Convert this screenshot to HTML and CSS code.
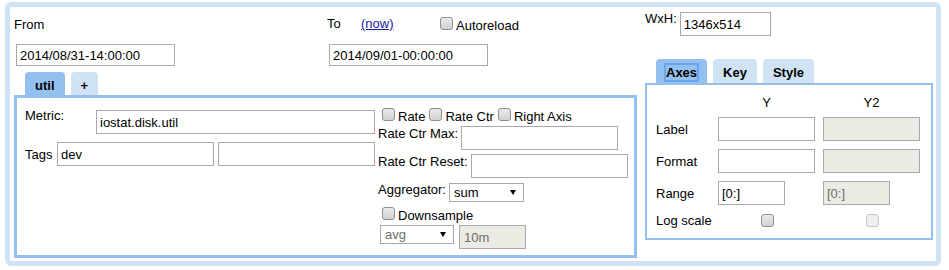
FILE: index.html
```html
<!DOCTYPE html>
<html lang="en">
<head>
    <meta charset="UTF-8">
    <meta name="viewport" content="width=device-width, initial-scale=1.0">
    <title>TSD - Query</title>
    <link rel="stylesheet" href="styles.css">
</head>
<body>
    <div class="frame">
        <div class="query-col">
            <div class="dates">
                <div class="date-box from-box">
                    <div class="date-head"><span class="from-label">From</span></div>
                    <input class="text date-input" type="text" value="2014/08/31-14:00:00">
                </div>
                <div class="date-box">
                    <div class="date-head">
                        <span class="to-label">To</span>
                        <a href="#" class="now-link">(now)</a>
                        <label class="check autoreload"><input type="checkbox">Autoreload</label>
                    </div>
                    <input class="text date-input" type="text" value="2014/09/01-00:00:00">
                </div>
            </div>

            <div class="tabs">
                <span class="tab active">util</span>
                <span class="tab">+</span>
            </div>
            <div class="panel metric-panel">
                <div class="metric-left">
                    <div class="metric-row">
                        <span class="metric-label">Metric:</span>
                        <input class="text metric-input" type="text" value="iostat.disk.util">
                    </div>
                    <div class="tags-row">
                        <span class="tags-label">Tags</span>
                        <input class="text tag-input tag-key" type="text" value="dev">
                        <input class="text tag-input" type="text" value="">
                    </div>
                </div>
                <div class="metric-right">
                    <div class="checks"><label class="check"><input type="checkbox">Rate</label><label class="check"><input type="checkbox">Rate Ctr</label><label class="check"><input type="checkbox">Right Axis</label></div>
                    <div class="field-row">
                        <span>Rate Ctr Max:</span>
                        <input class="text ctr-input" type="text">
                    </div>
                    <div class="field-row spaced">
                        <span>Rate Ctr Reset:</span>
                        <input class="text ctr-input" type="text">
                    </div>
                    <div class="field-row spaced">
                        <span>Aggregator:</span>
                        <div class="select agg-select"><span>sum</span><span class="arrow"></span></div>
                    </div>
                    <div class="downsample"><label class="check"><input type="checkbox">Downsample</label></div>
                    <div class="ds-row">
                        <div class="select ds-select off"><span>avg</span><span class="arrow"></span></div>
                        <input class="text ds-input" type="text" value="10m" disabled>
                    </div>
                </div>
            </div>
        </div>

        <div class="graph-col">
            <div class="wxh-row">
                <span>WxH:</span>
                <input class="text wxh-input" type="text" value="1346x514">
            </div>
            <div class="tabs graph-tabs">
                <span class="tab active"><span class="focus">Axes</span></span>
                <span class="tab">Key</span>
                <span class="tab">Style</span>
            </div>
            <div class="panel axes-panel">
                <div class="axes-grid">
                    <span></span>
                    <span class="axis-head">Y</span>
                    <span class="axis-head y2">Y2</span>

                    <span class="axis-label">Label</span>
                    <input class="text" type="text">
                    <input class="text y2" type="text" disabled>

                    <span class="axis-label">Format</span>
                    <input class="text" type="text">
                    <input class="text y2" type="text" disabled>

                    <span class="axis-label">Range</span>
                    <input class="text range-input" type="text" value="[0:]">
                    <input class="text range-input y2" type="text" value="[0:]" disabled>

                    <span class="axis-label">Log scale</span>
                    <input class="log-check" type="checkbox">
                    <input class="log-check y2" type="checkbox" disabled>
                </div>
            </div>
        </div>
    </div>
</body>
</html>
```

FILE: styles.css
```css
body {
    margin: 0;
    font-family: 'Liberation Sans', Arial, sans-serif;
    font-size: 13px;
    line-height: 15px;
    color: #000;
    background: #fff;
}

.frame {
    display: flex;
    gap: 8px;
    width: 936px;
    height: 264px;
    margin: 2px 0 0 5px;
    padding: 0 3px 0 4px;
    box-sizing: border-box;
    border: 5px solid #d0e3f5;
    border-radius: 6px;
}

/* form controls */
.text {
    flex-shrink: 0;
    min-width: 0;
    height: 24px;
    padding: 0 3px;
    box-sizing: border-box;
    border: 1px solid #a9a9a9;
    font: inherit;
    color: #000;
    background: #fff;
}
.text:disabled {
    background: #ebebe4;
    color: #6d6d6d;
}

input[type=checkbox] {
    appearance: none;
    width: 13px;
    height: 13px;
    margin: 0 3px 0 4px;
    box-sizing: border-box;
    border: 1px solid #8f8f8f;
    border-radius: 3px;
    background: linear-gradient(#e9e9e9, #d2d2d2);
    vertical-align: baseline;
}
input[type=checkbox]:disabled {
    border-color: #c8c8c8;
    background: #eeeeee;
}

.select {
    display: flex;
    flex-shrink: 0;
    justify-content: space-between;
    align-items: center;
    height: 19px;
    padding: 0 7px 0 4px;
    box-sizing: border-box;
    border: 1px solid #a9a9a9;
    background: #fff;
}
.select.off { color: #6d6d6d; }
.arrow {
    width: 0;
    height: 0;
    border-left: 3px solid transparent;
    border-right: 3px solid transparent;
    border-top: 5px solid #000;
}

/* tabs */
.tabs {
    display: flex;
    gap: 6px;
    padding-left: 11px;
    margin-top: 6px;
}
.tab {
    height: 23px;
    padding: 6px 10px 0;
    box-sizing: border-box;
    background: #d0e3f5;
    border-radius: 4px 4px 0 0;
    font-weight: bold;
}
.tab.active { background: #93c0ee; }

.panel {
    box-sizing: border-box;
    border: 3px solid #93c0ee;
}

/* left column */
.query-col { width: 623px; }

.dates {
    display: flex;
    padding-top: 9px;
}
.date-box { display: flex; flex-direction: column; }
.from-box { width: 313px; }
.date-head {
    display: flex;
    align-items: flex-start;
    height: 28px;
}
.from-label { margin-top: 1px; }
.to-label { width: 34px; }
.now-link { width: 75px; color: #1a1aa8; }
.autoreload { margin-top: 1px; }
.date-input {
    width: 159px;
    height: 22px;
    margin-left: 2px;
}

.metric-panel {
    display: flex;
    gap: 3px;
    height: 163px;
    padding: 12px 5px 0 8px;
}
.metric-left { width: 350px; flex-shrink: 0; }
.metric-row { display: flex; align-items: flex-start; }
.metric-label { width: 71px; margin-top: -2px; }
.metric-input { width: 279px; }
.tags-row {
    display: flex;
    align-items: center;
    margin-top: 8px;
}
.tags-label { width: 32px; }
.tag-input { width: 157px; }
.tag-key { margin-right: 4px; }

.metric-right { flex: 1; margin-top: -2px; white-space: nowrap; }
.checks { height: 18px; }
.field-row {
    display: flex;
    align-items: flex-start;
    gap: 3px;
}
.field-row.spaced { margin-top: 4px; }
.ctr-input { width: 157px; }
.agg-select { width: 75px; margin-top: 1px; }
.downsample { height: 17px; margin-top: 5px; }
.ds-row {
    display: flex;
    align-items: flex-start;
    gap: 5px;
    padding-left: 2px;
    margin-top: 1px;
}
.ds-select { width: 74px; }
.ds-input { width: 67px; padding-left: 4px; }

/* right column */
.graph-col { width: 288px; }

.wxh-row {
    display: flex;
    align-items: flex-start;
    gap: 3px;
    padding-top: 4px;
}
.wxh-input { width: 91px; margin-top: 1px; }

.graph-tabs { margin-top: 23px; }
.graph-tabs .tab { height: 24px; }
.focus { outline: 2px solid #6aa3ee; outline-offset: 0; }

.axes-panel {
    height: 157px;
    border-width: 2px;
    padding-left: 9px;
}
.axes-grid {
    display: grid;
    grid-template-columns: 62px 97px 8px 97px;
    grid-template-rows: 24px 24px 24px 24px 14px;
    row-gap: 8px;
}
.axes-grid .y2 { grid-column: 4; }
.axis-head {
    padding-top: 11px;
    line-height: 13px;
    text-align: center;
}
.axis-label { align-self: center; }
.range-input { width: 67px; }
.log-check {
    justify-self: center;
    align-self: center;
}
```
